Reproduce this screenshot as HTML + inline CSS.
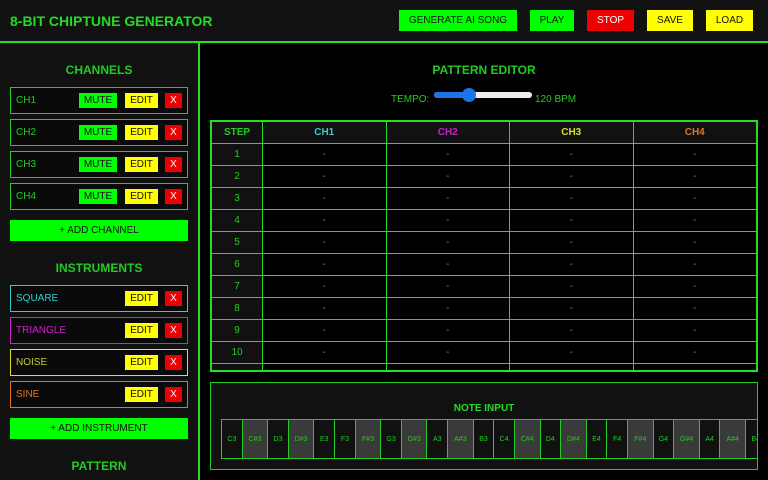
<!DOCTYPE html>
<html><head><style>
*{box-sizing:border-box;margin:0;padding:0}
body{width:768px;height:480px;background:#000;font-family:"Liberation Sans",sans-serif;position:relative;overflow:hidden;color:#22cc22}
.a{position:absolute}
.hdr{left:0;top:0;width:768px;height:43px;background:#111;border-bottom:2px solid #22dd22}
.title{left:10px;top:13px;font-size:14px;font-weight:bold;color:#22dd22}
.btn{position:absolute;font-size:10px;display:flex;align-items:center;justify-content:center;color:#111}
.g{background:#00ff00}.y{background:#ffff00}.r{background:#ee0000;color:#fff}
.side{left:0;top:43px;width:200px;height:437px;background:#111;border-right:2px solid #22dd22}
.h{font-size:12px;font-weight:bold;color:#22cc22;text-align:center;width:178px;left:10px}
.row{position:absolute;left:10px;width:178px;height:27px;border:1px solid #22cc22;background:#0a0a0a;font-size:10px}
.row span{position:absolute;left:5px;top:7px}
.row .btn{top:5px;height:15px}
table{border-collapse:collapse;font-size:10px}
td,th{border:1px solid #22dd22;height:22px;text-align:center;color:#777}
th{background:#111;font-size:10px}
td.s{background:#111;color:#22cc22}
.keys{left:221px;top:419px;width:536px;height:40px;overflow:hidden;display:flex;border-top:1px solid #22cc22;border-bottom:1px solid #22cc22}
.k{flex:none;height:38px;border-left:1px solid #22cc22;font-size:7px;color:#22cc22;display:flex;align-items:center;justify-content:center;background:#111}
.k.w{width:20.7px}.k.b{width:25.5px;background:#3a3a3a}
</style></head><body>
<div class="a hdr"></div>
<div class="a title">8-BIT CHIPTUNE GENERATOR</div>
<div class="btn g" style="left:399px;top:10px;width:118px;height:21px">GENERATE AI SONG</div>
<div class="btn g" style="left:530px;top:10px;width:44px;height:21px">PLAY</div>
<div class="btn r" style="left:587px;top:10px;width:47px;height:21px">STOP</div>
<div class="btn y" style="left:647px;top:10px;width:46px;height:21px">SAVE</div>
<div class="btn y" style="left:706px;top:10px;width:47px;height:21px">LOAD</div>
<div class="a side"></div>
<div class="a h" style="top:63px">CHANNELS</div>
<div class="row" style="top:87px"><span>CH1</span><div class="btn g" style="left:68px;width:38px">MUTE</div><div class="btn y" style="left:114px;width:33px">EDIT</div><div class="btn r" style="left:154px;width:17px">X</div></div>
<div class="row" style="top:119px"><span>CH2</span><div class="btn g" style="left:68px;width:38px">MUTE</div><div class="btn y" style="left:114px;width:33px">EDIT</div><div class="btn r" style="left:154px;width:17px">X</div></div>
<div class="row" style="top:151px"><span>CH3</span><div class="btn g" style="left:68px;width:38px">MUTE</div><div class="btn y" style="left:114px;width:33px">EDIT</div><div class="btn r" style="left:154px;width:17px">X</div></div>
<div class="row" style="top:183px"><span>CH4</span><div class="btn g" style="left:68px;width:38px">MUTE</div><div class="btn y" style="left:114px;width:33px">EDIT</div><div class="btn r" style="left:154px;width:17px">X</div></div>
<div class="btn g" style="left:10px;top:220px;width:178px;height:21px">+ ADD CHANNEL</div>
<div class="a h" style="top:261px">INSTRUMENTS</div>
<div class="row" style="top:285px;border-color:#33cccc;color:#33cccc"><span>SQUARE</span><div class="btn y" style="left:114px;width:33px">EDIT</div><div class="btn r" style="left:154px;width:17px">X</div></div>
<div class="row" style="top:317px;border-color:#cc22cc;color:#cc22cc"><span>TRIANGLE</span><div class="btn y" style="left:114px;width:33px">EDIT</div><div class="btn r" style="left:154px;width:17px">X</div></div>
<div class="row" style="top:349px;border-color:#dddd33;color:#cccc33"><span>NOISE</span><div class="btn y" style="left:114px;width:33px">EDIT</div><div class="btn r" style="left:154px;width:17px">X</div></div>
<div class="row" style="top:381px;border-color:#dd7722;color:#dd7722"><span>SINE</span><div class="btn y" style="left:114px;width:33px">EDIT</div><div class="btn r" style="left:154px;width:17px">X</div></div>
<div class="btn g" style="left:10px;top:418px;width:178px;height:21px">+ ADD INSTRUMENT</div>
<div class="a h" style="top:459px">PATTERN</div>

<div class="a" style="left:200px;top:63px;width:568px;text-align:center;font-size:12px;font-weight:bold;color:#22cc22">PATTERN EDITOR</div>
<div class="a" style="left:391px;top:94px;font-size:10px">TEMPO:</div>
<div class="a" style="left:434px;top:91px;width:98px;height:6px;border-radius:3px;background:#eee;margin-top:1px"></div>
<div class="a" style="left:434px;top:92px;width:35px;height:6px;border-radius:3px;background:#1a73e8"></div>
<div class="a" style="left:462px;top:88px;width:14px;height:14px;border-radius:50%;background:#1a73e8"></div>
<div class="a" style="left:535px;top:94px;font-size:10px">120 BPM</div>

<div class="a" style="left:210px;top:120px;width:548px;height:252px;overflow:hidden;border:2px solid #22dd22">
<table style="width:546px;margin:-1px">
<tr><th style="width:51px;color:#22cc22">STEP</th><th style="color:#33cccc">CH1</th><th style="color:#cc22cc">CH2</th><th style="color:#dddd33">CH3</th><th style="color:#dd7722">CH4</th></tr>
<tr><td class="s">1</td><td>-</td><td>-</td><td>-</td><td>-</td></tr>
<tr><td class="s">2</td><td>-</td><td>-</td><td>-</td><td>-</td></tr>
<tr><td class="s">3</td><td>-</td><td>-</td><td>-</td><td>-</td></tr>
<tr><td class="s">4</td><td>-</td><td>-</td><td>-</td><td>-</td></tr>
<tr><td class="s">5</td><td>-</td><td>-</td><td>-</td><td>-</td></tr>
<tr><td class="s">6</td><td>-</td><td>-</td><td>-</td><td>-</td></tr>
<tr><td class="s">7</td><td>-</td><td>-</td><td>-</td><td>-</td></tr>
<tr><td class="s">8</td><td>-</td><td>-</td><td>-</td><td>-</td></tr>
<tr><td class="s">9</td><td>-</td><td>-</td><td>-</td><td>-</td></tr>
<tr><td class="s">10</td><td>-</td><td>-</td><td>-</td><td>-</td></tr>
<tr><td class="s">11</td><td>-</td><td>-</td><td>-</td><td>-</td></tr>
</table></div>

<div class="a" style="left:210px;top:382px;width:548px;height:88px;background:#111;border:1px solid #22cc22"></div>
<div class="a" style="left:210px;top:403px;width:548px;text-align:center;font-size:10px;font-weight:bold;color:#22dd22">NOTE INPUT</div>
<div class="a keys">
<div class="k w">C3</div><div class="k b">C#3</div><div class="k w">D3</div><div class="k b">D#3</div><div class="k w">E3</div><div class="k w">F3</div><div class="k b">F#3</div><div class="k w">G3</div><div class="k b">G#3</div><div class="k w">A3</div><div class="k b">A#3</div><div class="k w">B3</div>
<div class="k w">C4</div><div class="k b">C#4</div><div class="k w">D4</div><div class="k b">D#4</div><div class="k w">E4</div><div class="k w">F4</div><div class="k b">F#4</div><div class="k w">G4</div><div class="k b">G#4</div><div class="k w">A4</div><div class="k b">A#4</div><div class="k w">B4</div>
</div>
</body></html>
